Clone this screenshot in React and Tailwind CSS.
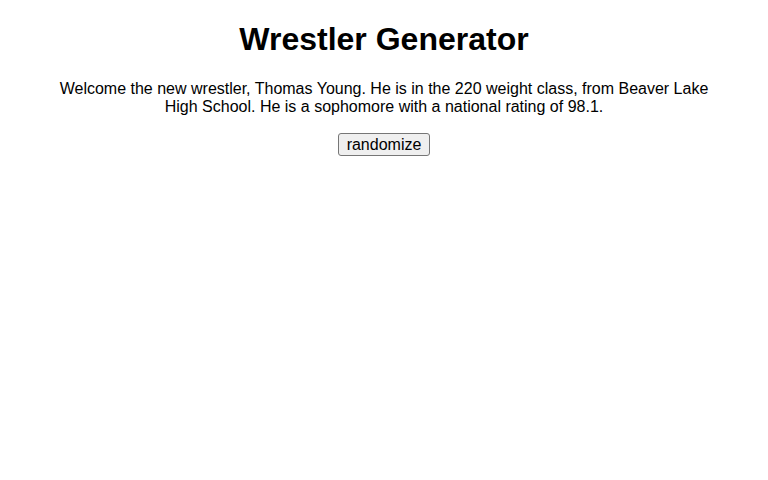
export default function App() {
    return (
        <div className="min-h-[480px] bg-white px-[50px] text-center text-black" style={{ fontFamily: '"Liberation Sans", Arial, sans-serif' }}>
            <h1 className="pt-[21px] text-[32px] font-bold leading-[37px]">Wrestler Generator</h1>
            <p className="mt-[22px] text-base leading-[18px]">
                Welcome the new wrestler, Thomas Young. He is in the 220 weight class, from Beaver Lake High School. He is a sophomore with a national rating of 98.1.
            </p>
            <button className="mt-[17px] h-[23px] rounded-[3px] border border-[#767676] bg-[#efefef] px-2 text-base leading-[19px] text-black">
                randomize
            </button>
        </div>
    );
}
